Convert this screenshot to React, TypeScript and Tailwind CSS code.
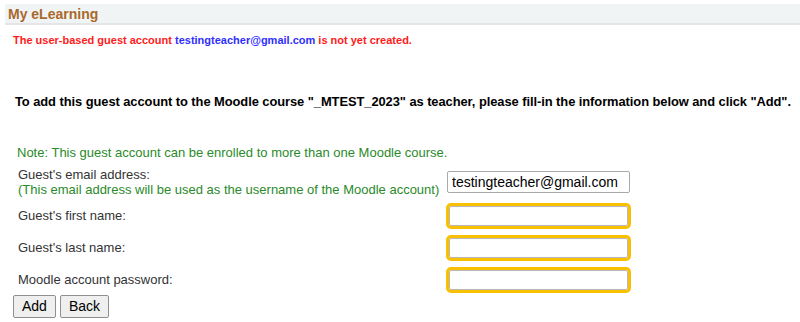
export default function App() {
  const font = { fontFamily: '"Liberation Sans", Arial, sans-serif' };

  return (
    <div className="w-[800px] h-[322px] bg-white overflow-hidden" style={font}>
      <div className="pt-[4px] pl-[5px]">
        <div className="h-[21px] bg-[#f1f4f5] border-b-2 border-[#e3e5e7] pl-[3px] flex items-center">
          <span className="text-[14px] font-bold text-[#a8692b] leading-none">My eLearning</span>
        </div>
      </div>

      <div className="pl-[13px] pt-[8px] text-[11px] font-bold text-[#ff1a1a] leading-[14px]">
        The user-based guest account <span className="text-[#2f2fff]">testingteacher@gmail.com</span> is not yet created.
      </div>

      <div className="pl-[15px] pt-[47px] text-[12.9px] font-bold text-black leading-[16px] whitespace-nowrap tracking-[-0.06px]">
        To add this guest account to the Moodle course "_MTEST_2023" as teacher, please fill-in the information below and click "Add".
      </div>

      <div className="pl-[17px] pt-[35px] text-[13px] text-[#2a8a2a] leading-[16px]">
        Note: This guest account can be enrolled to more than one Moodle course.
      </div>

      <div className="pl-[18px] pt-[5px] grid grid-cols-[429px_auto] text-[13px] text-[#333] leading-[15px]">
        <div className="h-[32px] flex flex-col justify-center">
          <span>Guest's email address:</span>
          <span className="text-[#2a8a2a]">(This email address will be used as the username of the Moodle account)</span>
        </div>
        <div className="h-[32px] flex items-center">
          <input
            readOnly
            value="testingteacher@gmail.com"
            className="w-[183px] h-[22px] border border-[#a9a9a9] rounded-[2px] px-[4px] text-[14px] text-black"
            style={font}
          />
        </div>

        {["Guest's first name:", "Guest's last name:", "Moodle account password:"].map((label) => (
          <div key={label} className="contents">
            <div className="h-[32px] flex items-center pt-[2px]">{label}</div>
            <div className="h-[32px] flex items-center pt-[3px]">
              <input
                type={label.startsWith("Moodle") ? "password" : "text"}
                className="w-[179px] h-[20px] ml-[2px] border border-[#b8b8b8] rounded-[2px] outline-[3px] outline-solid outline-[#f7c000] text-[14px]"
                style={font}
              />
            </div>
          </div>
        ))}
      </div>

      <div className="pl-[13px] pt-[1px] flex gap-[4px]">
        <button className="h-[23px] px-[8px] bg-[#efefef] border border-[#8f8f8f] rounded-[2px] text-[14px] text-black" style={font}>
          Add
        </button>
        <button className="h-[23px] px-[8px] bg-[#efefef] border border-[#8f8f8f] rounded-[2px] text-[14px] text-black" style={font}>
          Back
        </button>
      </div>
    </div>
  );
}
